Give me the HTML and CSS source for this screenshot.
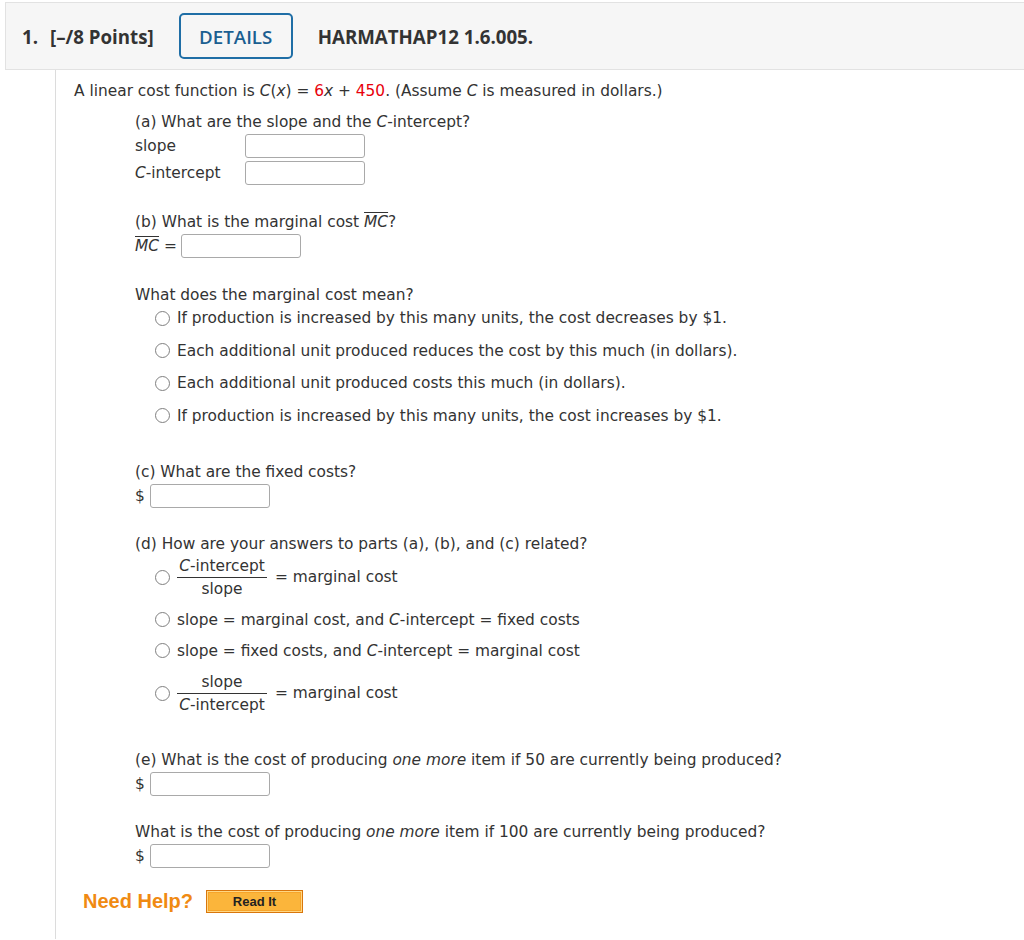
FILE: index.html
```html
<!DOCTYPE html>
<html>
<head>
<meta charset="utf-8">
<link rel="stylesheet" href="styles.css">
</head>
<body>
<div class="question">
  <div class="qheader">
    <span class="qnum">1.</span>
    <span class="pts">[–/8 Points]</span>
    <span class="details">DETAILS</span>
    <span class="qcode">HARMATHAP12 1.6.005.</span>
  </div>
  <div class="qbody">
    <p class="line">A linear cost function is <i>C</i>(<i>x</i>) = <span class="red">6</span><i>x</i> + <span class="red">450</span>. (Assume <i>C</i> is measured in dollars.)</p>

    <div class="part">
      <p class="line part-a">(a) What are the slope and the <i>C</i>-intercept?</p>
      <div class="field-row first">
        <span class="lbl">slope</span><span class="input"></span>
      </div>
      <div class="field-row second">
        <span class="lbl"><i>C</i>-intercept</span><span class="input"></span>
      </div>

      <p class="line part-b">(b) What is the marginal cost <i class="over">MC</i>?</p>
      <div class="field-row first">
        <span class="mc"><i class="over">MC</i> =</span><span class="input"></span>
      </div>

      <p class="line part-b">What does the marginal cost mean?</p>
      <div class="opts">
        <div class="opt"><span class="radio"></span><span>If production is increased by this many units, the cost decreases by $1.</span></div>
        <div class="opt"><span class="radio"></span><span>Each additional unit produced reduces the cost by this much (in dollars).</span></div>
        <div class="opt"><span class="radio"></span><span>Each additional unit produced costs this much (in dollars).</span></div>
        <div class="opt"><span class="radio"></span><span>If production is increased by this many units, the cost increases by $1.</span></div>
      </div>

      <p class="line part-c">(c) What are the fixed costs?</p>
      <div class="field-row first">
        <span class="dollar">$</span><span class="input"></span>
      </div>

      <p class="line part-d">(d) How are your answers to parts (a), (b), and (c) related?</p>
      <div class="opts opts-d">
        <div class="opt">
          <span class="radio"></span>
          <span class="frac"><span class="num"><i>C</i>-intercept</span><span class="den">slope</span></span>
          <span>= marginal cost</span>
        </div>
        <div class="opt"><span class="radio"></span><span>slope = marginal cost, and <i>C</i>-intercept = fixed costs</span></div>
        <div class="opt"><span class="radio"></span><span>slope = fixed costs, and <i>C</i>-intercept = marginal cost</span></div>
        <div class="opt">
          <span class="radio"></span>
          <span class="frac"><span class="num">slope</span><span class="den"><i>C</i>-intercept</span></span>
          <span>= marginal cost</span>
        </div>
      </div>

      <p class="line part-e">(e) What is the cost of producing <i>one more</i> item if 50 are currently being produced?</p>
      <div class="field-row first">
        <span class="dollar">$</span><span class="input"></span>
      </div>

      <p class="line part-f">What is the cost of producing <i>one more</i> item if 100 are currently being produced?</p>
      <div class="field-row first">
        <span class="dollar">$</span><span class="input"></span>
      </div>
    </div>

    <div class="help">
      <span class="need">Need Help?</span>
      <span class="readit">Read It</span>
    </div>
  </div>
</div>
</body>
</html>
```

FILE: styles.css
```css
html, body {
  margin: 0;
  padding: 0;
  background: #fff;
}

body {
  font-family: "DejaVu Sans", Verdana, sans-serif;
  font-size: 15.4px;
  color: #333;
}

.question {
  padding: 2px 0 0 5px;
}

.qheader {
  display: flex;
  align-items: center;
  height: 66px;
  background: #f6f6f6;
  border: 1px solid #e2e2e2;
  border-right: none;
  padding-left: 16px;
  font-family: "Open Sans", sans-serif;
  font-weight: 700;
  font-size: 18.7px;
  color: #333;
}

.qnum {
  margin-right: 12px;
}

.details {
  margin-left: 25px;
  width: 110px;
  height: 42px;
  border: 2px solid #1f6ea6;
  border-radius: 5px;
  display: flex;
  align-items: center;
  justify-content: center;
  color: #1b5f91;
  font-weight: 600;
}

.qcode {
  margin-left: 25px;
}

.qbody {
  margin-left: 50px;
  border-left: 1px solid #dcdcdc;
  padding: 10px 0 26px 18px;
}

.line {
  margin: 0;
  line-height: 22px;
}

.red {
  color: #e8000b;
}

.part {
  margin-left: 61px;
}

.part-a { margin-top: 9px; }
.part-b { margin-top: 26px; }
.part-c { margin-top: 34px; }
.part-d { margin-top: 25px; }
.part-e { margin-top: 33px; }
.part-f { margin-top: 25px; }

.field-row {
  display: flex;
  align-items: center;
  height: 24px;
}

.field-row.first { margin-top: 1px; }
.field-row.second { margin-top: 3px; }

.lbl {
  width: 110px;
}

.mc {
  width: 46px;
}

.dollar {
  width: 15px;
}

.over {
  text-decoration: overline;
}

.input {
  box-sizing: border-box;
  width: 120px;
  height: 24px;
  border: 1px solid #a9a9a9;
  border-radius: 3px;
  background: #fff;
}

.opts {
  display: flex;
  flex-direction: column;
  gap: 10.5px;
  margin-top: 1px;
}

.opts-d {
  gap: 9px;
  margin-top: 0;
}

.opt {
  display: flex;
  align-items: center;
  line-height: 22px;
  padding-left: 20px;
}

.radio {
  box-sizing: border-box;
  width: 15px;
  height: 15px;
  border: 1px solid #808080;
  border-radius: 50%;
  margin-right: 7px;
  flex: none;
}

.frac {
  display: inline-flex;
  flex-direction: column;
  align-items: center;
  margin-right: 8px;
  min-width: 90px;
}

.frac .num {
  display: block;
  width: 100%;
  text-align: center;
  border-bottom: 1px solid #333;
  line-height: 22px;
}

.frac .den {
  display: block;
  line-height: 22px;
}

.help {
  display: flex;
  align-items: center;
  margin-top: 22px;
  margin-left: 9px;
}

.need {
  font-family: "Liberation Sans", Arial, sans-serif;
  font-weight: 700;
  font-size: 20px;
  color: #f08a12;
}

.readit {
  margin-left: 13px;
  box-sizing: border-box;
  width: 97px;
  height: 23px;
  display: flex;
  align-items: center;
  justify-content: center;
  background: #fbb53b;
  border: 1px solid #d9760c;
  box-shadow: inset 0 0 0 1px #ffd783, inset 0 0 0 2px #f7a42a;
  font-family: "Liberation Sans", Arial, sans-serif;
  font-weight: 700;
  font-size: 13px;
  color: #222;
}
```
